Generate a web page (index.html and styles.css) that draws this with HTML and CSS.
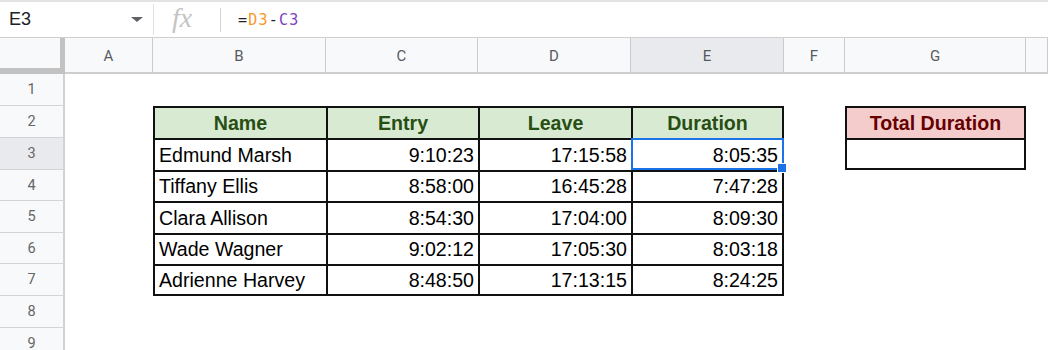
FILE: index.html
```html
<!DOCTYPE html>
<html>
<head>
<meta charset="utf-8">
<link rel="stylesheet" href="styles.css">
</head>
<body>
<div class="fbar">
  <div class="namebox"><span class="ref">E3</span><span class="caret"></span></div>
  <div class="sep"></div>
  <div class="fx">fx</div>
  <div class="sep2"></div>
  <div class="formula">=<span class="r1">D3</span>-<span class="r2">C3</span></div>
</div>
<div class="sheet">
  <div class="row hdr">
    <div class="corner"></div>
    <div class="ch">A</div>
    <div class="ch">B</div>
    <div class="ch">C</div>
    <div class="ch">D</div>
    <div class="ch on">E</div>
    <div class="ch">F</div>
    <div class="ch">G</div>
    <div class="ch"></div>
  </div>
  <div class="row">
    <div class="rh">1</div>
  </div>
  <div class="row">
    <div class="rh">2</div><div></div>
    <div class="t th g">Name</div>
    <div class="t th g">Entry</div>
    <div class="t th g">Leave</div>
    <div class="t th g te">Duration</div>
    <div></div>
    <div class="t th r te">Total Duration</div>
  </div>
  <div class="row">
    <div class="rh on">3</div><div></div>
    <div class="t">Edmund Marsh</div>
    <div class="t n">9:10:23</div>
    <div class="t n">17:15:58</div>
    <div class="t n te cur">8:05:35<span class="selbox"><span class="handle"></span></span></div>
    <div></div>
    <div class="t te tb"></div>
  </div>
  <div class="row h31">
    <div class="rh">4</div><div></div>
    <div class="t">Tiffany Ellis</div>
    <div class="t n">8:58:00</div>
    <div class="t n">16:45:28</div>
    <div class="t n te">7:47:28</div>
  </div>
  <div class="row">
    <div class="rh">5</div><div></div>
    <div class="t">Clara Allison</div>
    <div class="t n">8:54:30</div>
    <div class="t n">17:04:00</div>
    <div class="t n te">8:09:30</div>
  </div>
  <div class="row h31">
    <div class="rh">6</div><div></div>
    <div class="t">Wade Wagner</div>
    <div class="t n">9:02:12</div>
    <div class="t n">17:05:30</div>
    <div class="t n te">8:03:18</div>
  </div>
  <div class="row">
    <div class="rh">7</div><div></div>
    <div class="t tb">Adrienne Harvey</div>
    <div class="t n tb">8:48:50</div>
    <div class="t n tb">17:13:15</div>
    <div class="t n te tb">8:24:25</div>
  </div>
  <div class="row">
    <div class="rh">8</div>
  </div>
  <div class="row">
    <div class="rh">9</div>
  </div>
</div>
</body>
</html>
```
FILE: styles.css
```css
html, body {
  margin: 0;
  padding: 0;
  background: #fff;
  overflow: hidden;
}
body {
  width: 1048px;
  height: 350px;
  font-family: "Liberation Sans", Arial, sans-serif;
}
.fbar {
  height: 38px;
  box-sizing: border-box;
  border-top: 2px solid #e3e3e3;
  border-bottom: 1px solid #cfcfcf;
  display: flex;
  align-items: center;
}
.namebox {
  width: 153px;
  box-sizing: border-box;
  padding: 0 10px 0 9px;
  display: flex;
  align-items: center;
  justify-content: space-between;
}
.ref {
  font-size: 18px;
  color: #202124;
}
.caret {
  width: 0;
  height: 0;
  border-left: 6px solid transparent;
  border-right: 6px solid transparent;
  border-top: 5px solid #5f6368;
}
.sep {
  width: 1px;
  height: 31px;
  background: #e0e0e0;
}
.fx {
  margin-left: 18px;
  width: 30px;
  font-family: "Liberation Serif", serif;
  font-style: italic;
  font-size: 28px;
  color: #c4c4c4;
  line-height: 1;
  margin-top: -3px;
}
.sep2 {
  margin-left: 18px;
  width: 1px;
  height: 24px;
  background: #d6d6d6;
}
.formula {
  margin-left: 17px;
  font-family: "DejaVu Sans Mono", monospace;
  font-size: 15px;
  letter-spacing: 1.2px;
  color: #202124;
}
.r1 { color: #f7981d; }
.r2 { color: #7e3fbf; }

.row {
  display: grid;
  grid-template-columns: 65px 88px 173px 152px 153px 153px 61px 181px 1fr;
  height: 32px;
}
.row.h31 { height: 31px; }
.row.hdr {
  height: 36px;
  background: #f8f9fa;
}
.corner {
  border-right: 5px solid #c2c2c2;
  border-bottom: 6px solid #c2c2c2;
}
.ch {
  border-right: 1px solid #cacaca;
  border-bottom: 2px solid #cfcfcf;
  display: flex;
  align-items: center;
  justify-content: center;
  font-family: Roboto, "Liberation Sans", sans-serif;
  font-size: 15px;
  color: #575b60;
  padding-top: 1px;
}
.ch.on { background: #e8eaed; }
.rh {
  background: #f8f9fa;
  border-right: 2px solid #d2d2d2;
  border-bottom: 1px solid #d4d4d4;
  display: flex;
  align-items: center;
  justify-content: center;
  font-family: Roboto, "Liberation Sans", sans-serif;
  font-size: 14.5px;
  color: #666;
}
.rh.on { background: #e8eaed; }

.t {
  box-sizing: border-box;
  border-top: 2px solid #111;
  border-left: 2px solid #111;
  display: flex;
  align-items: center;
  padding: 0 4px 0 4px;
  font-size: 19.6px;
  color: #000;
  white-space: nowrap;
}
.t.n { justify-content: flex-end; }
.t.te { border-right: 2px solid #111; }
.t.tb { border-bottom: 2px solid #111; }
.t.th {
  justify-content: center;
  font-weight: bold;
}
.t.g { background: #d9ead3; color: #274e13; }
.t.r { background: #f4cccc; color: #660000; }

.cur { position: relative; }
.selbox {
  position: absolute;
  left: -2px;
  right: -2px;
  top: -2px;
  bottom: 0;
  border: 2px solid #1a73e8;
  box-sizing: border-box;
}
.handle {
  position: absolute;
  right: -5px;
  bottom: -5px;
  width: 8px;
  height: 8px;
  background: #1a73e8;
  border: 1px solid #fff;
}
```
